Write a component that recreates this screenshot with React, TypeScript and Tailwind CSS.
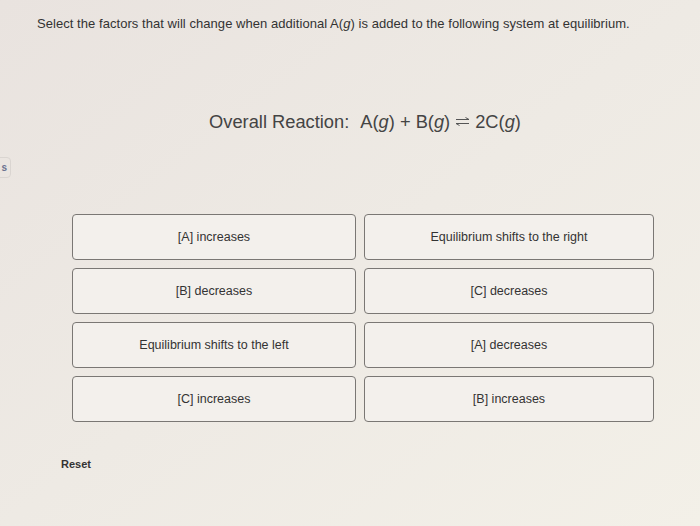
const choices: [string, string][] = [
  ['[A] increases', 'Equilibrium shifts to the right'],
  ['[B] decreases', '[C] decreases'],
  ['Equilibrium shifts to the left', '[A] decreases'],
  ['[C] increases', '[B] increases'],
];

function EqArrows() {
  return (
    <svg width="15" height="9" viewBox="0 0 15 9" className="mx-[5px] inline-block align-middle" fill="none" stroke="#555" strokeWidth="1">
      <path d="M1 2.5h13M10.5 0.5l3.5 2" />
      <path d="M1 6.5h13M1 6.5l3.5 2" />
    </svg>
  );
}

function Choice({ label }: { label: string }) {
  return (
    <button className="h-[46px] rounded-[4px] border border-[#7a7774] bg-[#f3f0ec] text-[12.5px] text-[#333] font-['Liberation_Sans',Arial,sans-serif]">
      {label}
    </button>
  );
}

export default function App() {
  return (
    <div className="relative h-[526px] w-[700px] overflow-hidden bg-gradient-to-br from-[#e9e3df] via-[#eeeae4] to-[#f3f0e8] font-['Liberation_Sans',Arial,sans-serif]">
      <div className="absolute left-[-8px] top-[157px] flex h-[21px] w-[19px] items-center justify-end rounded-[4px] border border-[#dad5d1] pr-[3px] text-[10px] font-bold text-[#6b7390]">
        s
      </div>

      <p className="pl-[37px] pt-[14px] text-[13px] tracking-[0.05px] text-[#333]">
        Select the factors that will change when additional A(<i>g</i>) is added to the following system at equilibrium.
      </p>

      <div className="mt-[74px] flex items-center justify-center pl-[30px] text-[18.3px] text-[#444]">
        <span>Overall Reaction:</span>
        <span className="ml-[11px]">A(<i>g</i>) + B(<i>g</i>)</span>
        <EqArrows />
        <span>2C(<i>g</i>)</span>
      </div>

      <div className="ml-[72px] mt-[79px] grid w-[582px] grid-cols-[284px_290px] gap-x-[8px] gap-y-[8px]">
        {choices.map(([left, right]) => (
          <>
            <Choice key={left} label={left} />
            <Choice key={right} label={right} />
          </>
        ))}
      </div>

      <button className="ml-[61px] mt-[34px] text-[11px] font-bold text-[#333]">Reset</button>
    </div>
  );
}
